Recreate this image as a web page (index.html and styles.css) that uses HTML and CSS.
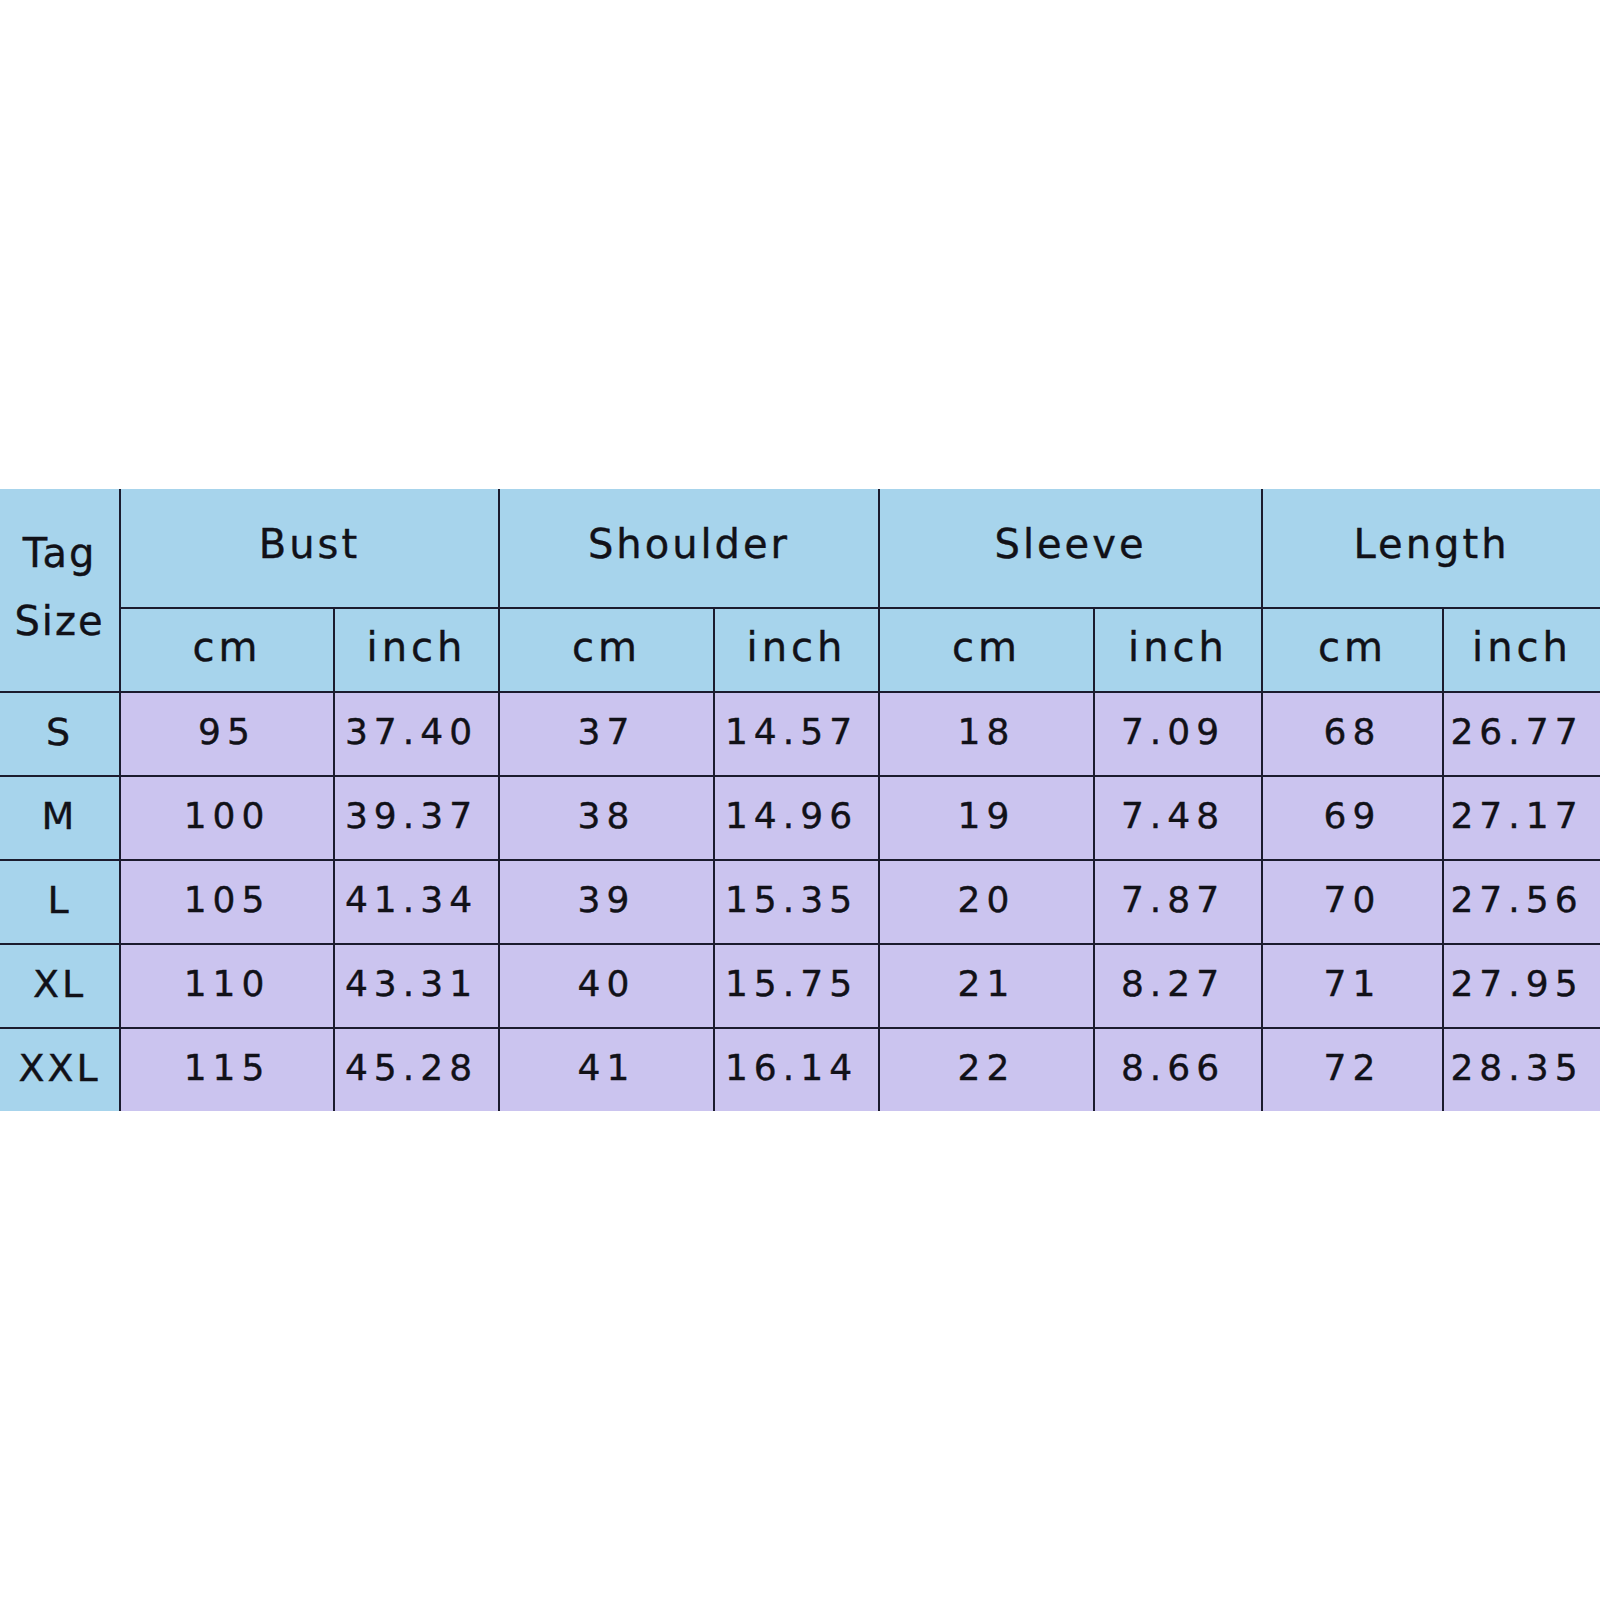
FILE: index.html
```html
<!DOCTYPE html>
<html>
<head>
<meta charset="utf-8">
<link rel="stylesheet" href="styles.css">
</head>
<body>
<div class="page">
  <div class="chart">
    <div class="cell head tag">Tag<br>Size</div>
    <div class="cell head group">Bust</div>
    <div class="cell head group">Shoulder</div>
    <div class="cell head group">Sleeve</div>
    <div class="cell head group">Length</div>
    <div class="cell head unit">cm</div><div class="cell head unit">inch</div>
    <div class="cell head unit">cm</div><div class="cell head unit">inch</div>
    <div class="cell head unit">cm</div><div class="cell head unit">inch</div>
    <div class="cell head unit">cm</div><div class="cell head unit">inch</div>

    <div class="cell size">S</div>
    <div class="cell val">95</div><div class="cell val in">37.40</div>
    <div class="cell val">37</div><div class="cell val in">14.57</div>
    <div class="cell val">18</div><div class="cell val in">7.09</div>
    <div class="cell val">68</div><div class="cell val in">26.77</div>

    <div class="cell size">M</div>
    <div class="cell val">100</div><div class="cell val in">39.37</div>
    <div class="cell val">38</div><div class="cell val in">14.96</div>
    <div class="cell val">19</div><div class="cell val in">7.48</div>
    <div class="cell val">69</div><div class="cell val in">27.17</div>

    <div class="cell size">L</div>
    <div class="cell val">105</div><div class="cell val in">41.34</div>
    <div class="cell val">39</div><div class="cell val in">15.35</div>
    <div class="cell val">20</div><div class="cell val in">7.87</div>
    <div class="cell val">70</div><div class="cell val in">27.56</div>

    <div class="cell size">XL</div>
    <div class="cell val">110</div><div class="cell val in">43.31</div>
    <div class="cell val">40</div><div class="cell val in">15.75</div>
    <div class="cell val">21</div><div class="cell val in">8.27</div>
    <div class="cell val">71</div><div class="cell val in">27.95</div>

    <div class="cell size">XXL</div>
    <div class="cell val">115</div><div class="cell val in">45.28</div>
    <div class="cell val">41</div><div class="cell val in">16.14</div>
    <div class="cell val">22</div><div class="cell val in">8.66</div>
    <div class="cell val">72</div><div class="cell val in">28.35</div>
  </div>
</div>
</body>
</html>
```

FILE: styles.css
```css
html, body {
  margin: 0;
  padding: 0;
  background: #ffffff;
}

.page {
  width: 1600px;
  height: 1600px;
  padding-top: 489px;
  box-sizing: border-box;
}

.chart {
  display: grid;
  grid-template-columns: 119px 212px 163px 213px 163px 213px 166px 179px 156px;
  grid-template-rows: 118px repeat(6, 82px);
  gap: 2px;
  background: #1b1b2e;
  width: 1600px;
  font-family: "DejaVu Sans", "Noto Sans", sans-serif;
  color: #111118;
}

.cell {
  display: flex;
  align-items: center;
  justify-content: center;
  text-align: center;
  -webkit-text-stroke: 0.4px #111118;
}

.head {
  background: #a7d4ec;
  font-size: 40px;
  letter-spacing: 3px;
}

.tag {
  grid-row: span 2;
  line-height: 68px;
  font-size: 40px;
  letter-spacing: 2px;
  padding-bottom: 6px;
}

.group {
  grid-column: span 2;
  padding-bottom: 8px;
}

.unit {
  padding-bottom: 6px;
  letter-spacing: 4px;
}

.size {
  background: #a7d4ec;
  font-size: 38px;
  letter-spacing: 3px;
  padding-bottom: 4px;
}

.val {
  background: #cbc4ef;
  font-size: 36px;
  letter-spacing: 6px;
  padding-bottom: 6px;
}

.val.in {
  padding-right: 10px;
}
```
